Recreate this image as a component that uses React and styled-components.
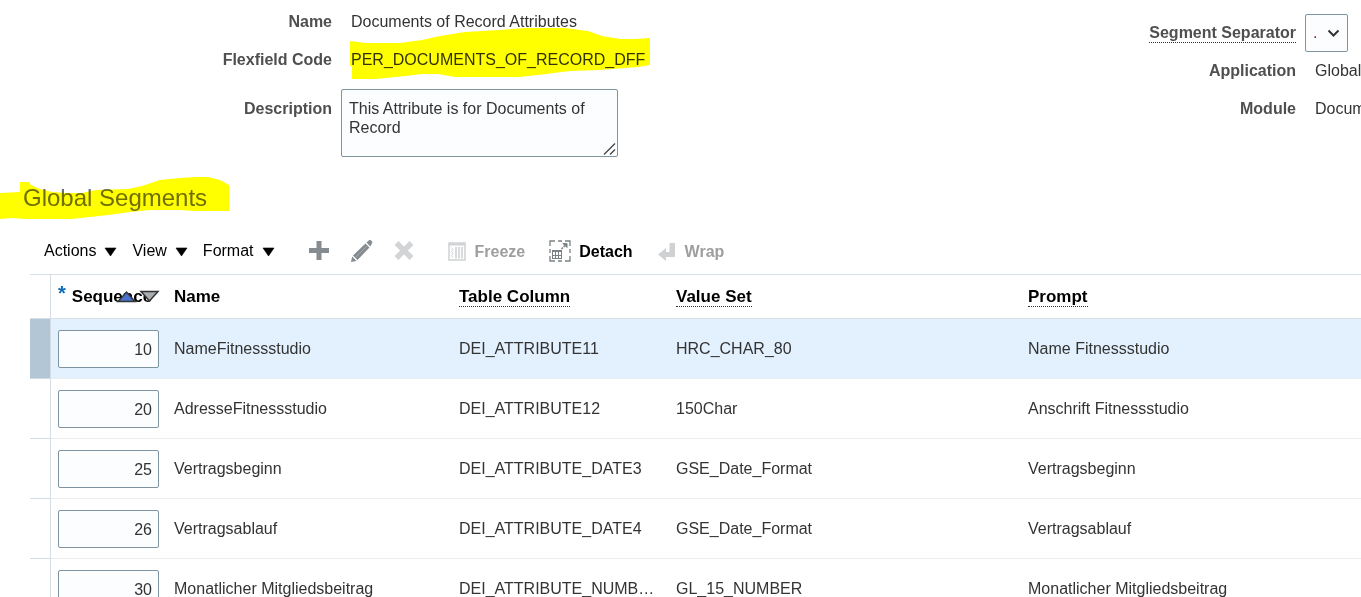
import React, { Component } from "react";
import styled, { createGlobalStyle } from "styled-components";

const GlobalStyle = createGlobalStyle`
  * {
    box-sizing: border-box;
  }
  body {
    margin: 0;
    background: #fff;
    color: #333;
    font-family: "Liberation Sans", Arial, sans-serif;
    font-size: 16px;
    line-height: 20px;
  }
  input, select, textarea, button {
    font: inherit;
  }
`;

const Page = styled.main`
  height: 100vh;
  overflow: hidden;
`;

const Header = styled.div`
  display: flex;
  justify-content: space-between;
`;

const Details = styled.div`
  padding-top: 3px;
`;

const Settings = styled.div`
  flex: none;
  width: 225px;
  padding-top: 14px;
  overflow: hidden;
`;

const Field = styled.div`
  display: flex;
  align-items: ${(props) => (props.$top ? "flex-start" : "center")};
  min-height: 38px;
  margin-top: ${(props) => (props.$top ? "10px" : "0")};
`;

const Label = styled.label`
  flex: none;
  width: ${(props) => props.$width};
  padding-top: ${(props) => (props.$top ? "10px" : "0")};
  margin-right: 9px;
  color: #4f4f4f;
  font-weight: bold;
  text-align: right;
  white-space: nowrap;
`;

const Dotted = styled.span`
  display: inline-block;
  height: 20px;
  border-bottom: 1px dotted #333;
`;

const Value = styled.span`
  position: relative;
  padding-left: 10px;
  white-space: nowrap;
`;

const TextAreaBox = styled.div`
  position: relative;
  width: 277px;
  height: 68px;
`;

const TextArea = styled.textarea`
  display: block;
  width: 100%;
  height: 100%;
  padding: 9px 7px;
  border: 1px solid #7e95a1;
  border-radius: 2px;
  background: #fbfdff;
  color: #333;
  line-height: 19px;
  resize: none;
  overflow: hidden;
`;

const Grip = styled.svg`
  position: absolute;
  right: 2px;
  bottom: 1px;
`;

const SelectBox = styled.div`
  position: relative;
  width: 43px;
  height: 38px;
`;

const Select = styled.select`
  appearance: none;
  display: block;
  width: 100%;
  height: 100%;
  padding: 0 7px;
  border: 1px solid #7e95a1;
  border-radius: 2px;
  background: #fbfdff;
  color: #8a1c1c;
`;

const Chevron = styled.svg`
  position: absolute;
  right: 8px;
  top: 14px;
  pointer-events: none;
`;

/* marker strokes lie on top of the text, as on paper */
const Marker = styled.svg`
  position: absolute;
  left: ${(props) => props.$left};
  top: ${(props) => props.$top};
  mix-blend-mode: multiply;
  pointer-events: none;
`;

const Title = styled.h2`
  position: relative;
  margin: 25px 0 0;
  padding-left: 23px;
  color: #6f6f6f;
  font-size: 24px;
  font-weight: normal;
  line-height: 32px;
`;

const Toolbar = styled.div`
  display: flex;
  align-items: center;
  height: 44px;
  margin-top: 16px;
  padding: 0 0 2px 44px;
`;

const MenuButton = styled.button`
  display: flex;
  align-items: center;
  gap: 8px;
  margin-right: 15px;
  padding: 0;
  border: 0;
  background: none;
  color: #000;

  svg {
    margin-top: 2px;
  }
`;

const IconButtons = styled.div`
  display: flex;
  gap: 20px;
  margin: 0 32px 0 18px;
`;

const IconButton = styled.button`
  display: flex;
  padding: 0;
  border: 0;
  background: none;
`;

const ToolButtons = styled.div`
  display: flex;
  gap: 24px;
`;

const ToolButton = styled.button`
  display: flex;
  align-items: center;
  gap: 8px;
  padding: 2px 0 0;
  border: 0;
  background: none;
  color: #000;
  font-weight: bold;

  svg {
    margin-top: -2px;
  }
  &:disabled {
    color: #9e9e9e;
  }
`;

const TableBox = styled.div`
  padding-left: 30px;
`;

const Table = styled.table`
  width: 100%;
  table-layout: fixed;
  border-collapse: separate;
  border-spacing: 0;
`;

const Col = styled.col`
  width: ${(props) => props.$width};
`;

const HeadCell = styled.th`
  position: relative;
  height: 45px;
  padding: 0 8px;
  border-top: 1px solid #d5dfe7;
  border-bottom: 1px solid #d5dfe7;
  color: #000;
  font-size: 17px;
  text-align: left;
  white-space: nowrap;
`;

const HeadGutter = styled.td`
  border-top: 1px solid #d5dfe7;
  border-right: 1px solid #d5dce4;
  border-bottom: 1px solid #d5dfe7;
`;

const SequenceLabel = styled.span`
  display: flex;
  gap: 6px;
  margin-left: -1px;
`;

const Required = styled.span`
  margin-top: -4px;
  color: #0d6cb8;
  font-size: 20px;
`;

const SortIcons = styled.svg`
  position: absolute;
  left: 65px;
  top: 14px;
`;

const Row = styled.tr`
  background: ${(props) => (props.$selected ? "#e3f1ff" : "#fff")};
`;

const Gutter = styled.td`
  border-right: 1px solid #d5dce4;
  border-bottom: 1px solid #d0dbe4;
  background: ${(props) => (props.$selected ? "#b2c6d6" : "#fff")};
`;

const Cell = styled.td`
  height: 60px;
  padding: 0 8px;
  border-bottom: 1px solid #e9edf0;
  overflow: hidden;
  text-overflow: ellipsis;
  white-space: nowrap;
`;

const NumberInput = styled.input`
  display: block;
  width: 101px;
  height: 38px;
  margin-left: -1px;
  padding: 2px 6px 0;
  border: 1px solid #7e95a1;
  border-radius: 2px;
  background: #fbfdff;
  color: #333;
  text-align: right;
`;

const segments = [
  { sequence: 10, name: "NameFitnessstudio", column: "DEI_ATTRIBUTE11", valueSet: "HRC_CHAR_80", prompt: "Name Fitnessstudio" },
  { sequence: 20, name: "AdresseFitnessstudio", column: "DEI_ATTRIBUTE12", valueSet: "150Char", prompt: "Anschrift Fitnessstudio" },
  { sequence: 25, name: "Vertragsbeginn", column: "DEI_ATTRIBUTE_DATE3", valueSet: "GSE_Date_Format", prompt: "Vertragsbeginn" },
  { sequence: 26, name: "Vertragsablauf", column: "DEI_ATTRIBUTE_DATE4", valueSet: "GSE_Date_Format", prompt: "Vertragsablauf" },
  { sequence: 30, name: "Monatlicher Mitgliedsbeitrag", column: "DEI_ATTRIBUTE_NUMBER1", valueSet: "GL_15_NUMBER", prompt: "Monatlicher Mitgliedsbeitrag" },
];

const Menu = ({ children }) => (
  <MenuButton type="button">
    {children}
    <svg width="13" height="10" viewBox="0 0 13 10">
      <path d="M1 1h11L6.500 9z" fill="#000" stroke="#000" strokeWidth=".6" strokeLinejoin="round" />
    </svg>
  </MenuButton>
);

const AddIcon = () => (
  <svg width="22" height="22" viewBox="0 0 22 22">
    <path d="M8.500 2h5v7H21v5h-7.500v7h-5v-7H1V9h7.500z" fill="#858b8f" />
  </svg>
);

const EditIcon = () => (
  <svg width="23" height="24" viewBox="0 0 23 24" fill="#858b8f">
    <path d="M1 23l1.200-5.500L6.500 22z" />
    <path d="M3 16.500L15.500 4.500l4 4L7.500 21z" />
    <path d="M16.500 3.500L19 1.200q1-.8 1.800 0l1.200 1.300q.8 1 0 1.800L20.300 7.500z" />
    <path d="M5.500 18.500L17 7" stroke="#a3a8ab" />
  </svg>
);

const DeleteIcon = () => (
  <svg width="22" height="22" viewBox="0 0 22 22">
    <path d="M3.500 4l15 15M18.500 4l-15 15" stroke="#d2d4d5" strokeWidth="5.500" />
  </svg>
);

const FreezeIcon = () => (
  <svg width="20" height="20" viewBox="0 0 20 20" fill="none" stroke="#cfd1d3">
    <rect x="2" y="2" width="16" height="17" strokeWidth="1.500" />
    <path d="M2 3.500h16" strokeWidth="2" />
    <path d="M4.500 6.500l1.500 2-1.500 2 1.500 2-1.500 2 1.500 2" />
    <path d="M9 6v11.500M12 6v11.500M15 6v11.500" strokeWidth="1.600" />
  </svg>
);

const DetachIcon = () => (
  <svg width="22" height="22" viewBox="0 0 22 22" fill="none" stroke="#7b8185">
    <path d="M1 6V1h5M9 1h4M16 1h5v5M21 9v4M21 16v5h-5M13 21H9M6 21H1v-5M1 13V9" strokeWidth="1.300" />
    <rect x="3.500" y="11.500" width="9" height="7" />
    <path d="M3 11h10" strokeWidth="2" />
    <path d="M3 15.500h10M6.500 11v8M9.500 11v8" />
    <path d="M12.500 9l4-4" strokeDasharray="2 1" strokeWidth="1.500" />
    <path d="M14 3.500h4v4z" fill="#7b8185" />
  </svg>
);

const WrapIcon = () => (
  <svg width="20" height="20" viewBox="0 0 20 20">
    <path d="M12.500 2H18v14H9v4l-8-6.500L9 7v4h3.500z" fill="#cfd1d3" />
  </svg>
);

class App extends Component {
  render() {
    return (
      <Page>
        <GlobalStyle />
        <Header>
          <Details>
            <Field>
              <Label as="span" $width="332px">Name</Label>
              <Value>Documents of Record Attributes</Value>
            </Field>
            <Field>
              <Label as="span" $width="332px">Flexfield Code</Label>
              <Value>
                PER_DOCUMENTS_OF_RECORD_DFF
                <Marker $left="9px" $top="-23px" width="300" height="54" viewBox="0 0 300 54">
                  <path
                    d="M0 14L16 16H50L72 13 90 9 115 5 150 3 175 1H215L238 4 252 9 270 12H285L300 11V38L288 40 250 43 220 44 196 47 170 50H105L88 47H72L55 49 26 52H2V39H0z"
                    fill="#ffff00"
                  />
                </Marker>
              </Value>
            </Field>
            <Field $top>
              <Label htmlFor="description" $width="332px" $top>Description</Label>
              <TextAreaBox>
                <TextArea id="description" defaultValue="This Attribute is for Documents of Record" />
                <Grip width="13" height="13" viewBox="0 0 13 13">
                  <path d="M1 11.500L12 .5M7 11.500l5-5" stroke="#444" strokeWidth="1.300" />
                </Grip>
              </TextAreaBox>
            </Field>
          </Details>
          <Settings>
            <Field>
              <Label htmlFor="separator" $width="160px">
                <Dotted>Segment Separator</Dotted>
              </Label>
              <SelectBox>
                <Select id="separator" defaultValue=".">
                  <option value=".">.</option>
                </Select>
                <Chevron width="13" height="10" viewBox="0 0 13 10">
                  <path d="M1.500 2.500l5 5 5-5" fill="none" stroke="#333" strokeWidth="2" />
                </Chevron>
              </SelectBox>
            </Field>
            <Field>
              <Label as="span" $width="160px">Application</Label>
              <Value>Global</Value>
            </Field>
            <Field>
              <Label as="span" $width="160px">Module</Label>
              <Value>Documents</Value>
            </Field>
          </Settings>
        </Header>

        <Title>
          Global Segments
          <Marker $left="0" $top="-6px" width="230" height="44" viewBox="0 0 230 44">
            <path
              d="M0 17L20 16V6H29L31 9 40 13 52 16 66 17H82L96 14 128 13 142 10 160 4 180 2 196 1H208L220 4 229 9V35H195L180 34H150L130 36 108 39 90 41 72 43H24L12 42 0 43z"
              fill="#ffff00"
            />
          </Marker>
        </Title>

        <Toolbar>
          <Menu>Actions</Menu>
          <Menu>View</Menu>
          <Menu>Format</Menu>
          <IconButtons>
            <IconButton type="button" aria-label="Add"><AddIcon /></IconButton>
            <IconButton type="button" aria-label="Edit"><EditIcon /></IconButton>
            <IconButton type="button" aria-label="Delete" disabled><DeleteIcon /></IconButton>
          </IconButtons>
          <ToolButtons>
            <ToolButton type="button" disabled><FreezeIcon />Freeze</ToolButton>
            <ToolButton type="button"><DetachIcon />Detach</ToolButton>
            <ToolButton type="button" disabled><WrapIcon />Wrap</ToolButton>
          </ToolButtons>
        </Toolbar>

        <TableBox>
          <Table>
            <colgroup>
              <Col $width="21px" />
              <Col $width="115px" />
              <Col $width="285px" />
              <Col $width="217px" />
              <Col $width="352px" />
              <Col />
            </colgroup>
            <thead>
              <tr>
                <HeadGutter />
                <HeadCell>
                  <SequenceLabel>
                    <Required>*</Required>
                    Sequence
                  </SequenceLabel>
                  <SortIcons width="44" height="16" viewBox="0 0 44 16">
                    <path d="M2 12.500L10.500 3 19 12.500z" fill="#4a72c8" stroke="#333" strokeWidth="1.500" />
                    <path d="M25 2.500h17L33.500 12z" fill="#a9adb0" stroke="#333" strokeWidth="1.500" />
                  </SortIcons>
                </HeadCell>
                <HeadCell>Name</HeadCell>
                <HeadCell><Dotted>Table Column</Dotted></HeadCell>
                <HeadCell><Dotted>Value Set</Dotted></HeadCell>
                <HeadCell><Dotted>Prompt</Dotted></HeadCell>
              </tr>
            </thead>
            <tbody>
              {segments.map((item, index) => (
                <Row key={item.sequence} $selected={index === 0}>
                  <Gutter $selected={index === 0} />
                  <Cell>
                    <NumberInput defaultValue={item.sequence} aria-label="Sequence" />
                  </Cell>
                  <Cell>{item.name}</Cell>
                  <Cell>{item.column}</Cell>
                  <Cell>{item.valueSet}</Cell>
                  <Cell>{item.prompt}</Cell>
                </Row>
              ))}
            </tbody>
          </Table>
        </TableBox>
      </Page>
    );
  }
}

export default App;
